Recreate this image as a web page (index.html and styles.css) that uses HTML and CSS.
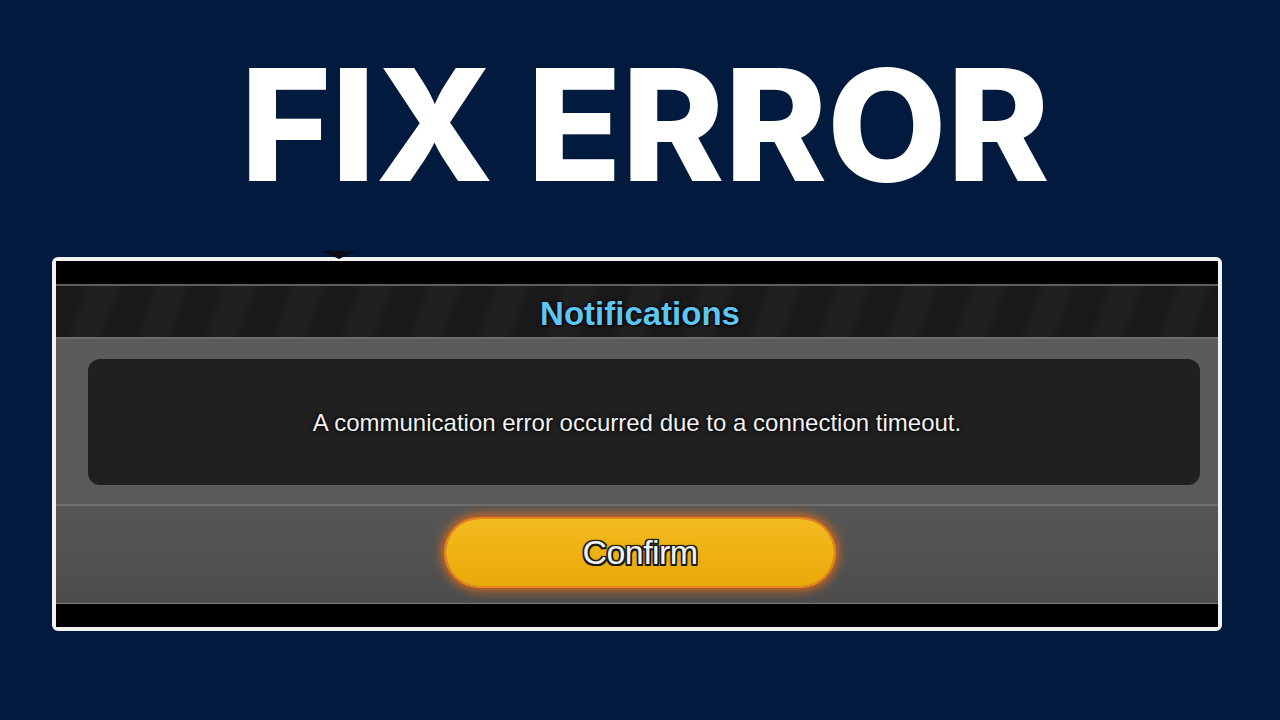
FILE: index.html
```html
<!DOCTYPE html>
<html lang="en">
<head>
    <meta charset="UTF-8">
    <meta name="viewport" content="width=device-width, initial-scale=1.0">
    <title>Fix Error</title>
    <link rel="stylesheet" href="styles.css">
</head>
<body>
    <div class="page">
        <h1 class="title">FIX ERROR</h1>

        <div class="dialog">
            <span class="notch"></span>
            <div class="top-band"></div>
            <div class="header">
                <h2 class="header-title">Notifications</h2>
            </div>
            <div class="body">
                <div class="message">
                    <p>A communication error occurred due to a connection timeout.</p>
                </div>
            </div>
            <div class="footer">
                <button class="confirm-btn">Confirm</button>
            </div>
            <div class="bottom-band"></div>
        </div>
    </div>
</body>
</html>
```

FILE: styles.css
```css
html, body {
    margin: 0;
    height: 100%;
}
body {
    background: #021a3d;
    overflow: hidden;
}
.page {
    width: 1280px;
    height: 720px;
    padding-top: 48px;
    box-sizing: border-box;
}
.title {
    margin: 0;
    font-family: Inter, "Open Sans", sans-serif;
    font-weight: 800;
    font-size: 155px;
    line-height: 154px;
    color: #ffffff;
    text-align: center;
    padding-left: 10px;
}
.dialog {
    position: relative;
    margin: 55px 0 0 52px;
    width: 1162px;
    border: 4px solid #f2f2f2;
    border-radius: 6px;
    background: #000;
    display: flex;
    flex-direction: column;
}
.notch {
    position: absolute;
    left: 266px;
    top: -10px;
    width: 0;
    height: 0;
    border-left: 17px solid transparent;
    border-right: 17px solid transparent;
    border-top: 8px solid #0a0d14;
    filter: blur(0.7px);
}
.top-band {
    height: 23px;
    background: #000;
}
.header {
    height: 51px;
    border-top: 2px solid #5e5e5e;
    border-bottom: 2px solid #6c6c6c;
    background-color: #1b1b1b;
    background-image: repeating-linear-gradient(110deg, #191919 0px, #191919 26px, #202020 34px, #202020 56px, #191919 64px);
    display: flex;
    align-items: center;
    justify-content: center;
}
.header-title {
    margin: 0;
    padding: 4px 0 0 6px;
    font-family: "Liberation Sans", Arial, sans-serif;
    font-weight: bold;
    font-size: 33px;
    color: #5ec6f3;
    text-shadow: 0 0 2px #000, 0 0 3px #000, 1px 1px 2px #000;
}
.body {
    background: #5b5b5b;
    padding: 20px 18px 19px 32px;
    border-bottom: 2px solid #6e6e6e;
}
.message {
    height: 126px;
    padding: 2px 14px 0 0;
    box-sizing: border-box;
    background: #202020;
    border-radius: 12px;
    display: flex;
    align-items: center;
    justify-content: center;
}
.message p {
    margin: 0;
    font-family: "Liberation Sans", Arial, sans-serif;
    font-size: 24px;
    color: #f2f2f2;
    text-shadow: 0 0 2px #000, 0 0 4px #000;
}
.footer {
    height: 97px;
    background: linear-gradient(#565656, #4d4d4d);
    border-bottom: 1px solid #7a7a7a;
    display: flex;
    align-items: center;
    justify-content: center;
}
.confirm-btn {
    width: 388px;
    height: 67px;
    margin: 0 0 4px 6px;
    border: none;
    border-radius: 34px;
    background: linear-gradient(#f4bc20, #efb214 45%, #e9a90b);
    box-shadow: 0 0 0 2px #e8841c, 0 0 10px 5px rgba(235, 110, 20, 0.8);
    font-family: "Liberation Sans", Arial, sans-serif;
    font-size: 34px;
    letter-spacing: -0.6px;
    color: #f4f4f4;
    text-shadow:
        1.5px 0 0 #1a1a1a, -1.5px 0 0 #1a1a1a,
        0 1.5px 0 #1a1a1a, 0 -1.5px 0 #1a1a1a,
        1.5px 1.5px 0 #1a1a1a, -1.5px -1.5px 0 #1a1a1a,
        1.5px -1.5px 0 #1a1a1a, -1.5px 1.5px 0 #1a1a1a,
        0 0 3px #111;
    cursor: pointer;
}
.bottom-band {
    height: 23px;
    background: #000;
}
```
